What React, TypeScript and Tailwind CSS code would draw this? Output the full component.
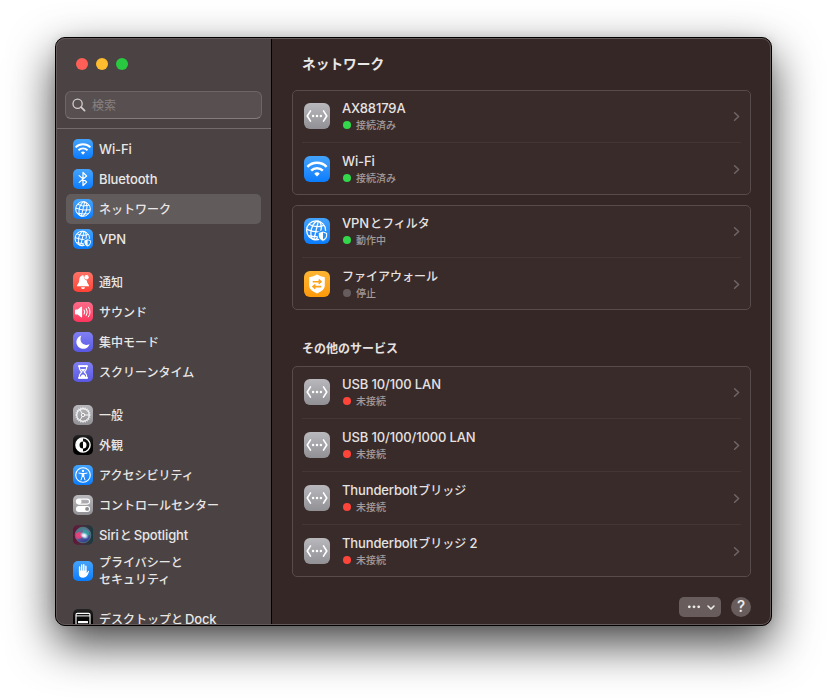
import { Fragment, type ReactNode } from "react";

type IconName =
  | "wifi" | "bluetooth" | "globe" | "vpn" | "bell" | "sound" | "moon" | "hourglass"
  | "gear" | "appearance" | "access" | "toggles" | "siri" | "hand" | "dock" | "ethernet" | "firewall";

const BLUE = "bg-gradient-to-b from-[#43a3fb] to-[#077cfd]";
const GRAY = "bg-gradient-to-b from-[#b9b8bc] to-[#919095]";
const INDIGO = "bg-gradient-to-b from-[#8180f3] to-[#5957e2]";
const BLACK = "bg-gradient-to-b from-[#252424] to-[#000000]";

const backgrounds: Record<IconName, string> = {
  wifi: BLUE, bluetooth: BLUE, globe: BLUE, vpn: BLUE,
  bell: "bg-gradient-to-b from-[#fe7266] to-[#fd4136]",
  sound: "bg-gradient-to-b from-[#fd6a88] to-[#fc345d]",
  moon: INDIGO, hourglass: INDIGO,
  gear: GRAY, appearance: BLACK, access: BLUE, toggles: GRAY,
  siri: "bg-gradient-to-r from-[#641038] to-[#0f3b40]",
  hand: BLUE, dock: BLACK, ethernet: GRAY,
  firewall: "bg-gradient-to-b from-[#fdb532] to-[#fd9a06]",
};

const globeLines = (
  <>
    <circle cx="10" cy="10" r="7.3" />
    <ellipse cx="10" cy="10" rx="3.7" ry="7.3" transform="rotate(14 10 10)" />
    <path d="M11.7 2.9 8.3 17.1M2.8 9.2Q9.5 12 17.2 10.8M4.6 5.3Q9.4 8.4 16.1 6.1M4 14.1Q9.5 15.4 15.4 14.8" />
  </>
);

const teeth = Array.from({ length: 20 }, (_, i) => i * 18);

const glyphs: Record<IconName, ReactNode> = {
  wifi: (
    <g fill="none" stroke="#fff" strokeWidth="1.9">
      <path d="M2.6 8.3a10.5 10.5 0 0 1 14.8 0" />
      <path d="M5.5 11.2a6.4 6.4 0 0 1 9 0" />
      <path d="M10 15.8 7.9 13.6a3 3 0 0 1 4.2 0Z" fill="#fff" stroke="none" />
    </g>
  ),
  bluetooth: (
    <path d="M6.2 6.6 13.6 13 10 16.6V3.4L13.6 7 6.2 13.4" fill="none" stroke="#fff" strokeWidth="1.25" strokeLinejoin="round" strokeLinecap="round" />
  ),
  globe: <g fill="none" stroke="#fff" strokeWidth="1">{globeLines}</g>,
  vpn: (
    <>
      <g fill="none" stroke="#fff" strokeWidth="1" transform="translate(-.7 -.5)">{globeLines}</g>
      <path d="M14.6 9.3 18.7 10.8V13.8Q18.5 16.8 14.6 18.5 10.7 16.8 10.5 13.8V10.8Z" fill="#2390fc" />
      <path d="M14.6 10.3 17.8 11.5V13.8Q17.6 16.2 14.6 17.5 11.6 16.2 11.4 13.8V11.5Z" fill="#fff" />
      <path d="M14.6 11.2 17 12.1V13.8Q16.8 15.6 14.6 16.6Z" fill="#2390fc" />
    </>
  ),
  bell: (
    <>
      <path d="M9.6 3.2C6.9 3.7 6.3 6 6.2 8.5 6.1 11.5 3.9 12.3 3.9 14.2H16.1C16.1 12.3 13.9 11.5 13.8 8.5Q10.5 7.3 10.7 3.4Z" fill="#fff" />
      <circle cx="13.5" cy="5.3" r="2.2" fill="#fff" />
      <path d="M8 15.2H12Q11.6 17.1 10 17.1T8 15.2Z" fill="#fff" />
    </>
  ),
  sound: (
    <>
      <path d="M2 8.2Q2 7.4 2.8 7.4H4.7L8 4.7Q9.1 4 9.1 5.2V14.8Q9.1 16 8 15.3L4.7 12.6H2.8Q2 12.6 2 11.8Z" fill="#fff" />
      <path d="M11.2 7.9Q12.5 10 11.2 12.1M13.3 6.5Q15.6 10 13.3 13.5M15.4 5.1Q18.8 10 15.4 14.9" fill="none" stroke="#fff" strokeWidth="1" strokeLinecap="round" />
    </>
  ),
  moon: <path d="M8.3 3.5A6.8 6.8 0 1 0 16.6 12.3Q10.9 14.5 8.3 10.2 6.7 7 8.3 3.5Z" fill="#fff" />,
  hourglass: (
    <>
      <path d="M6.2 4.1H13.8Q13.9 8.1 11.2 10 13.9 11.9 13.8 15.9H6.2Q6.1 11.9 8.8 10 6.1 8.1 6.2 4.1Z" fill="none" stroke="#fff" strokeWidth="1.1" />
      <path d="M5.2 3.3H14.8V4.9H5.2ZM5.2 15.1H14.8V16.7H5.2ZM7.5 7.1H12.5L10 9.7ZM7.1 15.3Q7.5 13.3 10 12.2 12.5 13.3 12.9 15.3Z" fill="#fff" />
    </>
  ),
  gear: (
    <g fill="none" stroke="#fff">
      {teeth.map((a) => <path key={a} d="M10 2.3V4" strokeWidth="1" transform={`rotate(${a} 10 10)`} />)}
      <circle cx="10" cy="10" r="6.2" strokeWidth="1" />
      <circle cx="10" cy="10" r="1.7" strokeWidth=".9" />
      <path d="M11.9 10H16M9.1 8.4 7 4.8M9.1 11.6 7 15.2" strokeWidth=".9" />
    </g>
  ),
  appearance: (
    <>
      <circle cx="10" cy="10" r="7.1" fill="none" stroke="#fff" strokeWidth="1.4" />
      <path d="M10 2.9A7.1 7.1 0 0 0 10 17.1V13.5A3.5 3.5 0 0 1 10 6.5ZM10 6.5A3.5 3.5 0 0 1 10 13.5Z" fill="#fff" />
    </>
  ),
  access: (
    <>
      <circle cx="10" cy="10" r="7.3" fill="none" stroke="#fff" strokeWidth="1.1" />
      <circle cx="10" cy="5.9" r="1.15" fill="#fff" />
      <path d="M6 8.1 9 8.6H11L14 8.1M9.2 8.6V11.4L8 15M10.8 8.6V11.4L12 15" fill="none" stroke="#fff" strokeWidth="1" strokeLinecap="round" />
      <path d="M9 8.5H11V12H9Z" fill="#fff" />
    </>
  ),
  toggles: (
    <>
      <rect x="3.4" y="4.1" width="13.2" height="5" rx="2.5" fill="none" stroke="#fff" strokeWidth="1.1" />
      <circle cx="6" cy="6.6" r="2.5" fill="#fff" />
      <rect x="2.9" y="10.9" width="14.2" height="6" rx="3" fill="#fff" />
      <circle cx="14.1" cy="13.9" r="1.9" fill="#8b8a8f" />
    </>
  ),
  siri: (
    <>
      <defs>
        <linearGradient id="siriOrb" x1="0.2" y1="0" x2=".6" y2="1">
          <stop offset="0" stopColor="#2a8f80" />
          <stop offset=".45" stopColor="#7d5fa0" />
          <stop offset="1" stopColor="#24408f" />
        </linearGradient>
        <radialGradient id="siriGlow">
          <stop offset="0" stopColor="#fff" />
          <stop offset=".4" stopColor="#e6f6fc" stopOpacity=".85" />
          <stop offset="1" stopColor="#6dd6ef" stopOpacity="0" />
        </radialGradient>
      </defs>
      <circle cx="10" cy="10" r="7.8" fill="url(#siriOrb)" stroke="#5b8088" strokeWidth=".7" />
      <path d="M10 4.5Q16.5 4.5 16.6 10 14 11 10.4 10Z" fill="#27a99a" opacity=".8" />
      <path d="M2.8 9Q6 4.6 10.4 10 7.5 15.2 3.6 13.4Z" fill="#f03f74" opacity=".9" />
      <ellipse cx="11.3" cy="10.6" rx="4.8" ry="3.5" fill="url(#siriGlow)" transform="rotate(28 11.3 10.6)" />
    </>
  ),
  hand: (
    <g fill="none" stroke="#fff" strokeWidth="1.45" strokeLinecap="round">
      <path d="M6.6 10.2V6M8.7 9.5V4M10.8 9.5V3.8M12.9 10V5.3" />
      <path d="M5.9 9.5H13.6V12L15.2 9.9Q16 9.3 16.1 10.1 14.7 16.8 10 16.8 5.9 16.8 5.9 12.4Z" fill="#fff" stroke="none" />
    </g>
  ),
  dock: (
    <>
      <rect x="3" y="4.4" width="14" height="11.6" rx="1.4" fill="none" stroke="#fff" strokeWidth="1.1" />
      <path d="M3 6.9H17" stroke="#fff" strokeWidth="1" />
      <rect x="5" y="12" width="10" height="2.2" rx=".5" fill="#fff" />
    </>
  ),
  ethernet: (
    <>
      <path d="M5 6.1 2.5 10 5 13.9M15 6.1 17.5 10 15 13.9" fill="none" stroke="#fff" strokeWidth="1.25" strokeLinecap="round" strokeLinejoin="round" />
      <circle cx="7" cy="10" r=".95" fill="#fff" />
      <circle cx="10" cy="10" r=".95" fill="#fff" />
      <circle cx="13" cy="10" r=".95" fill="#fff" />
    </>
  ),
  firewall: (
    <>
      <path d="M10 2.7Q12.8 4.4 16 4.9V11.3Q16 14.7 10 17.4 4 14.7 4 11.3V4.9Q7.2 4.4 10 2.7Z" fill="#fff" />
      <path d="M6.7 8.2H12.8M11.3 6.6 13.1 8.2 11.3 9.8M13.3 12H7.2M8.7 10.4 6.9 12 8.7 13.6" fill="none" stroke="#fda21b" strokeWidth="1.2" />
    </>
  ),
};

function AppIcon({ name, large = false }: { name: IconName; large?: boolean }) {
  return (
    <div className={`shrink-0 overflow-hidden ${backgrounds[name]} ${large ? "size-[26px] rounded-[6px]" : "size-5 rounded-[5px]"}`}>
      <svg viewBox="0 0 20 20" className="block size-full">{glyphs[name]}</svg>
    </div>
  );
}

/* Latin runs use Inter one size above the kana and kanji. */
function Label({ text }: { text: string }) {
  const runs = text.match(/[\x21-\x7e]+(?: [\x21-\x7e]+)*|[^\x20-\x7e]+ ?/g) ?? [];
  return (
    <>
      {runs.map((run, i) =>
        /^[\x21-\x7e]/.test(run) ? (
          <span key={i} className={`text-[13px] tracking-[-0.13px] ${runs.length > 1 && i === 0 ? "mr-px" : i > 0 && !runs[i - 1].endsWith(" ") ? "ml-0.5" : ""}`}>{run}</span>
        ) : (
          <span key={i} className="text-[12px]">{run}</span>
        ),
      )}
    </>
  );
}

const groups: { icon: IconName; label: string; second?: string; active?: boolean }[][] = [
  [
    { icon: "wifi", label: "Wi-Fi" },
    { icon: "bluetooth", label: "Bluetooth" },
    { icon: "globe", label: "ネットワーク", active: true },
    { icon: "vpn", label: "VPN" },
  ],
  [
    { icon: "bell", label: "通知" },
    { icon: "sound", label: "サウンド" },
    { icon: "moon", label: "集中モード" },
    { icon: "hourglass", label: "スクリーンタイム" },
  ],
  [
    { icon: "gear", label: "一般" },
    { icon: "appearance", label: "外観" },
    { icon: "access", label: "アクセシビリティ" },
    { icon: "toggles", label: "コントロールセンター" },
    { icon: "siri", label: "SiriとSpotlight" },
    { icon: "hand", label: "プライバシーと", second: "セキュリティ" },
  ],
  [{ icon: "dock", label: "デスクトップとDock" }],
];

type Service = { icon: IconName; title: string; status: string; dot: string };
const GREEN = "bg-[#32d74b]";
const RED = "bg-[#ff453a]";

const connected: Service[] = [
  { icon: "ethernet", title: "AX88179A", status: "接続済み", dot: GREEN },
  { icon: "wifi", title: "Wi-Fi", status: "接続済み", dot: GREEN },
];
const filters: Service[] = [
  { icon: "vpn", title: "VPNとフィルタ", status: "動作中", dot: GREEN },
  { icon: "firewall", title: "ファイアウォール", status: "停止", dot: "bg-[#675c5d]" },
];
const others: Service[] = [
  { icon: "ethernet", title: "USB 10/100 LAN", status: "未接続", dot: RED },
  { icon: "ethernet", title: "USB 10/100/1000 LAN", status: "未接続", dot: RED },
  { icon: "ethernet", title: "Thunderboltブリッジ", status: "未接続", dot: RED },
  { icon: "ethernet", title: "Thunderboltブリッジ 2", status: "未接続", dot: RED },
];

function Card({ services }: { services: Service[] }) {
  return (
    <div className="rounded-[5px] border border-[#584b4b] bg-[#392b2a] px-[9px]">
      {services.map((s, i) => (
        <Fragment key={s.title}>
          {i > 0 && <div className="h-px bg-[#433635]" />}
          <div className={`flex items-start pl-0.5 ${i === 0 ? "h-[51px] pt-[9px]" : i === services.length - 1 ? "h-[51px] pt-2.5" : "h-[52px] pt-2.5"}`}>
            <div className="flex h-8 flex-1 items-center">
              <AppIcon name={s.icon} large />
              <div className="ml-3 flex-1">
                <div className="h-4 text-[13px] leading-4 text-[#e6e2e1]"><Label text={s.title} /></div>
                <div className="mt-0.5 flex h-3.5 items-center text-[10px] leading-[14px] text-[#a39a99]">
                  <span className={`mr-[5px] ml-px size-2 rounded-full ${s.dot}`} />
                  {s.status}
                </div>
              </div>
              <svg viewBox="0 0 8 12" className="h-3 w-2" fill="none" stroke="#716665" strokeWidth="1.5" strokeLinecap="round" strokeLinejoin="round">
                <path d="M1.6 2.7 5.6 6.5 1.6 10.3" />
              </svg>
            </div>
          </div>
        </Fragment>
      ))}
    </div>
  );
}

export default function App() {
  return (
    <div className="h-[699px] w-[827px] overflow-hidden bg-white pt-[37px] pl-[55px] font-['Inter','Noto_Sans_CJK_JP',sans-serif] font-medium">
      <div className="relative flex h-[589px] w-[717px] overflow-hidden rounded-[10px] border border-black bg-[#352726] shadow-[0_18px_46px_rgba(0,0,0,0.74),0_0_10px_rgba(0,0,0,0.1)]">
        <aside className="flex w-[216px] shrink-0 flex-col border-r border-black bg-[#4b4343]">
          <div className="flex shrink-0 gap-2 pt-5 pl-5">
            <span className="size-3 rounded-full bg-[#ff5f57]" />
            <span className="size-3 rounded-full bg-[#febc2e]" />
            <span className="size-3 rounded-full bg-[#28c840]" />
          </div>
          <div className="mt-[21px] ml-[9px] flex h-7 w-[197px] shrink-0 items-center rounded-[6px] border border-[#6d6666] border-b-[#827c7b] bg-[#585050] pl-1.5">
            <svg viewBox="0 0 14 14" className="size-3.5" fill="none" stroke="#d1cecd" strokeWidth="1.3" strokeLinecap="round">
              <circle cx="5.6" cy="5.7" r="4.6" />
              <path d="M9.1 9.2 12.6 12.7" strokeWidth="1.7" />
            </svg>
            <span className="ml-1.5 pt-0.5 text-[12px] leading-4 font-normal text-[#888181]">検索</span>
          </div>
          <div className="mt-[9px] h-px shrink-0 bg-[#726b6b]" />
          <nav className="mt-[5px] flex flex-col gap-[13px] px-2.5">
            {groups.map((group) => (
              <div key={group[0].label}>
                {group.map((item) => (
                  <div
                    key={item.label}
                    className={`flex w-[195px] items-center rounded-[5px] pl-[7px] text-[12px] text-[#e9e7e6] ${item.second ? "h-[41px]" : "h-[30px]"} ${item.active ? "bg-[#625b5b]" : ""}`}
                  >
                    <AppIcon name={item.icon} />
                    <div className="ml-1.5 leading-[17px]">
                      <div className="h-[17px]"><Label text={item.label} /></div>
                      {item.second && <div className="h-[17px]">{item.second}</div>}
                    </div>
                  </div>
                ))}
              </div>
            ))}
          </nav>
        </aside>

        <main className="flex flex-1 flex-col pr-5 pl-5">
          <h1 className="ml-2.5 pt-4 text-[13.7px] leading-5 font-bold text-[#eae7e6]">ネットワーク</h1>
          <div className="mt-4"><Card services={connected} /></div>
          <div className="mt-2.5"><Card services={filters} /></div>
          <h2 className="mt-[30px] mb-2 ml-2.5 text-[12px] leading-[18px] font-bold text-[#e6e2e1]">その他のサービス</h2>
          <Card services={others} />
          <div className="mt-5 flex items-center justify-end gap-2.5">
            <button className="flex h-5 w-[42px] items-center justify-center rounded-[5px] bg-[#685d5c]">
              <svg viewBox="0 0 42 20" className="h-5 w-[42px]">
                <g fill="#eeebeb">
                  <circle cx="10.3" cy="9.8" r="1.4" />
                  <circle cx="15" cy="9.8" r="1.4" />
                  <circle cx="19.7" cy="9.8" r="1.4" />
                </g>
                <path d="M29 9 32 12 35 9" fill="none" stroke="#eeebeb" strokeWidth="1.6" strokeLinecap="round" strokeLinejoin="round" />
              </svg>
            </button>
            <button className="flex size-5 items-center justify-center rounded-full bg-[#685d5c] text-[15.5px] leading-5 font-medium text-[#eeebeb]">?</button>
          </div>
        </main>
        <div className="pointer-events-none absolute inset-0 rounded-[9px] border border-[#655a5a]" />
      </div>
    </div>
  );
}
